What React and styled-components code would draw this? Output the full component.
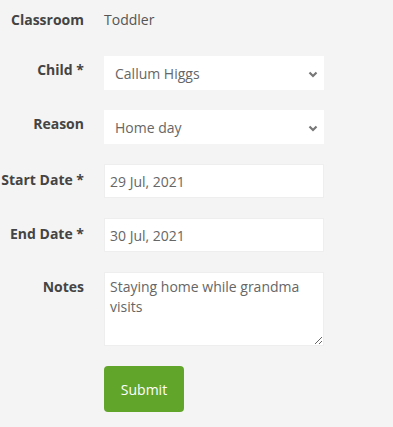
import React from "react";
import styled, { createGlobalStyle } from "styled-components";

const GlobalStyle = createGlobalStyle`
  html, body {
    margin: 0;
    padding: 0;
    background: #f4f4f4;
    font-family: "Open Sans", "Liberation Sans", sans-serif;
  }
`;

const Form = styled.form`
  display: grid;
  grid-template-columns: 84px 220px;
  column-gap: 20px;
  row-gap: 20px;
  align-items: start;
`;

const Label = styled.label`
  text-align: right;
  font-size: 14px;
  line-height: 20px;
  font-weight: 700;
  color: #444;
  padding-top: ${(p) => p.$offset || 0}px;
  padding-bottom: ${(p) => p.$bottom || 0}px;
  white-space: nowrap;
`;

const StaticValue = styled.div`
  font-size: 14px;
  line-height: 20px;
  color: #555;
  padding: 10px 0 6px;
`;

const SelectWrap = styled.div`
  position: relative;
  height: 34px;
`;

const Select = styled.select`
  appearance: none;
  -webkit-appearance: none;
  width: 100%;
  height: 34px;
  border: none;
  border-radius: 0;
  background: #fff;
  padding: 0 28px 0 11px;
  font-family: inherit;
  font-size: 14px;
  color: #666;
  outline: none;
`;

const Chevron = styled.svg`
  position: absolute;
  right: 6px;
  top: 15px;
  pointer-events: none;
`;

const TextInput = styled.input`
  box-sizing: border-box;
  width: 100%;
  height: 34px;
  border: 1px solid #eee;
  background: #fff;
  padding: 0 5px;
  font-family: inherit;
  font-size: 14px;
  color: #666;
  outline: none;
`;

const TextArea = styled.textarea`
  box-sizing: border-box;
  width: 100%;
  height: 74px;
  display: block;
  border: 1px solid #eee;
  background: #fff;
  padding: 4px 5px;
  font-family: inherit;
  font-size: 14px;
  line-height: 20px;
  color: #666;
  outline: none;
  resize: vertical;
`;

const Submit = styled.button`
  grid-column: 2;
  justify-self: start;
  width: 80px;
  height: 46px;
  border: none;
  border-radius: 4px;
  background: #62a52b;
  color: #fff;
  font-family: inherit;
  font-size: 14px;
  cursor: pointer;
`;

const ChevronIcon = () => (
  <Chevron width="10" height="7" viewBox="0 0 10 7">
    <path d="M1.5 1.5l3.5 3.5 3.5-3.5" fill="none" stroke="#777" strokeWidth="2.2" />
  </Chevron>
);

const SelectField = ({ value, options }) => (
  <SelectWrap>
    <Select defaultValue={value}>
      {options.map((o) => (
        <option key={o}>{o}</option>
      ))}
    </Select>
    <ChevronIcon />
  </SelectWrap>
);

export default function App() {
  return (
    <>
      <GlobalStyle />
      <Form onSubmit={(e) => e.preventDefault()}>
        <Label $offset={10} $bottom={6}>Classroom</Label>
        <StaticValue>Toddler</StaticValue>

        <Label $offset={4}>Child *</Label>
        <SelectField value="Callum Higgs" options={["Callum Higgs", "Ava Higgs"]} />

        <Label $offset={4}>Reason</Label>
        <SelectField value="Home day" options={["Home day", "Sick", "Holiday"]} />

        <Label $offset={6}>Start Date *</Label>
        <TextInput defaultValue="29 Jul, 2021" />

        <Label $offset={6}>End Date *</Label>
        <TextInput defaultValue="30 Jul, 2021" />

        <Label $offset={5}>Notes</Label>
        <TextArea defaultValue="Staying home while grandma visits" />

        <Submit type="submit">Submit</Submit>
      </Form>
    </>
  );
}
